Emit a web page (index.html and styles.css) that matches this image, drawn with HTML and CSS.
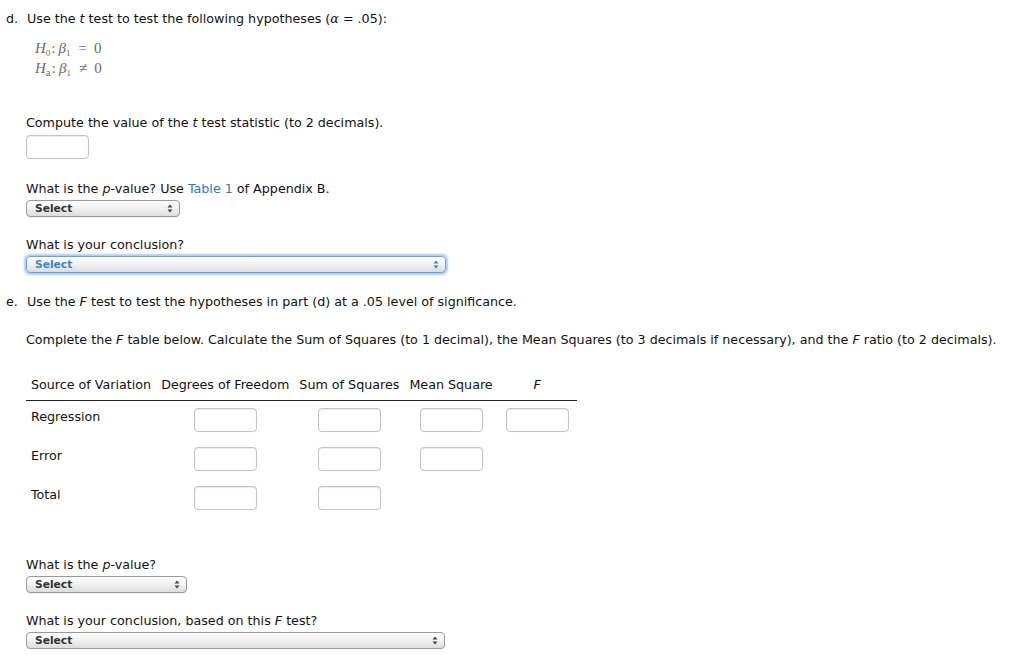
FILE: index.html
```html
<!DOCTYPE html>
<html>
<head>
<meta charset="utf-8">
<link rel="stylesheet" href="styles.css">
</head>
<body>
<div class="page">
  <div class="item item-d">
    <span class="label">d.</span>
    <span>Use the <i>t</i> test to test the following hypotheses (<span class="alpha">α</span> = .05):</span>
  </div>
  <div class="hyp">
    <div class="hline"><i>H</i><sub>0</sub><span class="colon">:</span><i class="beta">β</i><sub>1</sub><span class="op">=</span><span class="num">0</span></div>
    <div class="hline"><i>H</i><sub class="suba">a</sub><span class="colon">:</span><i class="beta">β</i><sub>1</sub><span class="op">≠</span><span class="num">0</span></div>
  </div>

  <div class="block">
    <p class="q q-compute">Compute the value of the <i>t</i> test statistic (to 2 decimals).</p>
    <div class="inp"></div>
  </div>

  <div class="block">
    <p class="q q-p1">What is the <i>p</i>-value? Use <span class="link">Table 1</span> of Appendix B.</p>
    <div class="select w153"><span>Select</span><svg width="6" height="9" viewBox="0 0 6 9"><path d="M3 0.5 L5.5 3.5 L0.5 3.5 Z M3 8.5 L5.5 5.5 L0.5 5.5 Z" fill="#444"/></svg></div>
  </div>

  <div class="block">
    <p class="q q-c1">What is your conclusion?</p>
    <div class="select focus w419"><span>Select</span><svg width="6" height="9" viewBox="0 0 6 9"><path d="M3 0.5 L5.5 3.5 L0.5 3.5 Z M3 8.5 L5.5 5.5 L0.5 5.5 Z" fill="#3a86c8"/></svg></div>
  </div>

  <div class="item item-e">
    <span class="label">e.</span>
    <span>Use the <i>F</i> test to test the hypotheses in part (d) at a .05 level of significance.</span>
  </div>

  <p class="q q-complete">Complete the <i>F</i> table below. Calculate the Sum of Squares (to 1 decimal), the Mean Squares (to 3 decimals if necessary), and the <i>F</i> ratio (to 2 decimals).</p>

  <table class="ftable">
    <thead>
      <tr>
        <th class="first">Source of Variation</th>
        <th>Degrees of Freedom</th>
        <th>Sum of Squares</th>
        <th>Mean Square</th>
        <th class="fcol"><i>F</i></th>
      </tr>
    </thead>
    <tbody>
      <tr>
        <td class="first">Regression</td>
        <td><div class="inp"></div></td>
        <td><div class="inp"></div></td>
        <td><div class="inp"></div></td>
        <td><div class="inp"></div></td>
      </tr>
      <tr>
        <td class="first">Error</td>
        <td><div class="inp"></div></td>
        <td><div class="inp"></div></td>
        <td><div class="inp"></div></td>
        <td></td>
      </tr>
      <tr>
        <td class="first">Total</td>
        <td><div class="inp"></div></td>
        <td><div class="inp"></div></td>
        <td></td>
        <td></td>
      </tr>
    </tbody>
  </table>

  <div class="block">
    <p class="q q-p2">What is the <i>p</i>-value?</p>
    <div class="select w160"><span>Select</span><svg width="6" height="9" viewBox="0 0 6 9"><path d="M3 0.5 L5.5 3.5 L0.5 3.5 Z M3 8.5 L5.5 5.5 L0.5 5.5 Z" fill="#444"/></svg></div>
  </div>

  <div class="block">
    <p class="q q-c2">What is your conclusion, based on this <i>F</i> test?</p>
    <div class="select w418"><span>Select</span><svg width="6" height="9" viewBox="0 0 6 9"><path d="M3 0.5 L5.5 3.5 L0.5 3.5 Z M3 8.5 L5.5 5.5 L0.5 5.5 Z" fill="#444"/></svg></div>
  </div>
</div>
</body>
</html>
```
FILE: styles.css
```css
html, body {
  margin: 0;
  padding: 0;
  background: #fff;
}
body {
  font-family: "DejaVu Sans", Verdana, sans-serif;
  font-size: 12.7px;
  line-height: 16px;
  color: #111;
}
.page {
  padding: 11px 0 0 6px;
}
p { margin: 0; }

.item {
  display: flex;
}
.item .label {
  width: 21px;
}
.alpha {
  font-family: "DejaVu Serif", serif;
  font-style: italic;
}

.hyp {
  margin: 11px 0 0 29px;
  font-family: "Liberation Serif", "Times New Roman", serif;
  font-size: 15px;
  color: #6a6a6a;
}
.hline {
  line-height: 20px;
  height: 20px;
  display: flex;
  align-items: baseline;
  white-space: pre;
}
.hyp sub {
  font-size: 9px;
  line-height: 0;
  vertical-align: -3px;
  position: relative;
  top: 3px;
}
.hyp sub.suba {
  font-size: 11px;
}
.hyp i { font-style: italic; }
.hyp .colon { margin-left: 1px; }
.hyp .beta { margin-left: 3px; }
.hyp .op { margin-left: 8px; }
.hyp .num { margin-left: 7px; }

.block {
  padding-left: 20px;
}
.q {
  padding-left: 20px;
}
.block .q { padding-left: 0; }

.q-compute { margin-top: 37px; }
.block .inp { margin-top: 4px; }

.q-p1 { margin-top: 22px; }
.q-c1 { margin-top: 20px; }
.q-p2 { margin-top: 39px; }
.q-c2 { margin-top: 20px; }

.item-e { margin-top: 21px; }
.q-complete { margin-top: 22px; }

.inp {
  width: 61px;
  height: 22px;
  border: 1px solid #c4c4c4;
  border-radius: 4px;
  background: #fff;
  box-shadow: inset 0 1px 1px rgba(0,0,0,0.08), 0 0 1px rgba(0,0,0,0.08);
  box-sizing: content-box;
}

.select {
  margin-top: 3px;
  height: 15px;
  border: 1px solid #9a9a9a;
  border-radius: 4px;
  background: linear-gradient(#ffffff, #f1f1f1 50%, #dcdcdc);
  display: flex;
  align-items: center;
  justify-content: space-between;
  padding: 0 6px 0 8px;
  box-sizing: content-box;
  font-size: 10.7px;
  font-weight: bold;
  color: #333;
  box-shadow: 0 1px 0 rgba(0,0,0,0.05);
}
.select span {
  line-height: 15px;
}
.w153 { width: 138px; }
.w419 { width: 404px; }
.w160 { width: 145px; }
.w418 { width: 403px; }

.select.focus {
  border-color: #6aa3dc;
  box-shadow: 0 0 2px 2px rgba(106, 163, 230, 0.55);
  color: #3a86c8;
}

.link { color: #2a77c4; }

.ftable {
  margin: 24px 0 0 20px;
  border-collapse: collapse;
}
.ftable th {
  font-weight: normal;
  padding: 5px 5px 7px 5px;
  text-align: center;
  white-space: nowrap;
  border-bottom: 1px solid #222;
  vertical-align: top;
}
.ftable th.first, .ftable td.first {
  text-align: left;
}
.ftable th.fcol {
  width: 69px;
}
.ftable td {
  padding: 7px 5px 8px 5px;
  vertical-align: top;
  text-align: center;
  height: 24px;
}
.ftable td.first {
  padding-top: 8px;
  padding-bottom: 7px;
}
.ftable td .inp {
  display: inline-block;
  vertical-align: top;
}
```
